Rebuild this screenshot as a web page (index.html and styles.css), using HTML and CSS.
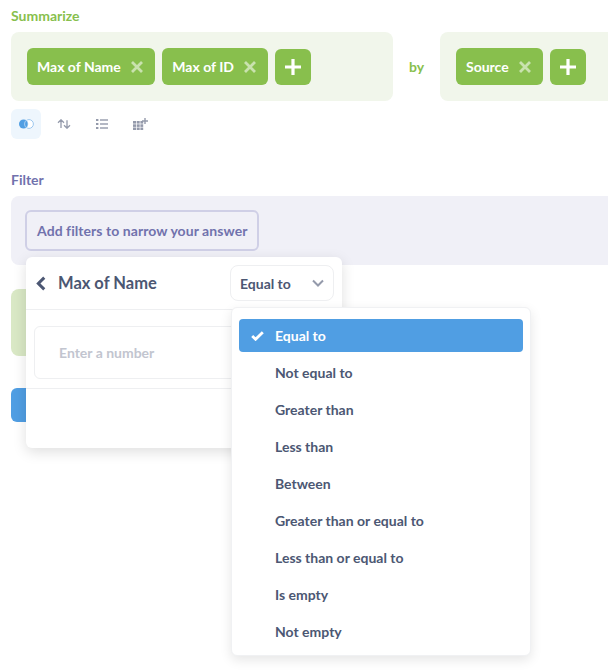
FILE: index.html
```html
<!DOCTYPE html>
<html lang="en">
<head>
<meta charset="utf-8">
<title>Summarize and filter</title>
<link rel="stylesheet" href="styles.css">
</head>
<body>
<main class="page">
  <section class="summarize">
    <h2 class="label label-green">Summarize</h2>
    <div class="sum-row">
      <div class="well well-main">
        <span class="pill">Max of Name <svg class="x" viewBox="0 0 12 12"><path d="M1 1l10 10M11 1L1 11"/></svg></span>
        <span class="pill">Max of ID <svg class="x" viewBox="0 0 12 12"><path d="M1 1l10 10M11 1L1 11"/></svg></span>
        <span class="add"><svg viewBox="0 0 16 16"><path d="M8 0v16M0 8h16"/></svg></span>
      </div>
      <span class="by">by</span>
      <div class="well well-by">
        <span class="pill">Source <svg class="x" viewBox="0 0 12 12"><path d="M1 1l10 10M11 1L1 11"/></svg></span>
        <span class="add"><svg viewBox="0 0 16 16"><path d="M8 0v16M0 8h16"/></svg></span>
      </div>
    </div>
    <div class="tools">
      <span class="tool tool-on"><svg viewBox="0 0 15 10" width="15" height="10"><circle cx="10" cy="5" r="4.400" fill="#fff" stroke="#9cc7ee" stroke-width="1"/><circle cx="4.600" cy="5" r="4.600" fill="#509ee3"/><path d="M7.300 1.200a5 5 0 0 1 0 7.600a5 5 0 0 1 0-7.600z" fill="#509ee3" stroke="#fff" stroke-width="0.500"/></svg></span>
      <span class="tool"><svg viewBox="0 0 14 10" width="14" height="10" fill="none" stroke="#949aab" stroke-width="1.300"><path d="M4 9V0.800M1 3.800L4 0.800l3 3M10 1.200V9.200M7 6.200l3 3 3-3"/></svg></span>
      <span class="tool"><svg viewBox="0 0 12 10" width="12" height="10" fill="#949aab"><rect x="0" y="0" width="2.400" height="2"/><rect x="0" y="4" width="2.400" height="2"/><rect x="0" y="8" width="2.400" height="2"/><rect x="4" y="0.300" width="8" height="1.400"/><rect x="4" y="4.300" width="8" height="1.400"/><rect x="4" y="8.300" width="8" height="1.400"/></svg></span>
      <span class="tool"><svg viewBox="0 0 15 12" width="15" height="12" fill="#949aab"><rect x="0" y="3" width="3" height="2.600"/><rect x="3.700" y="3" width="3" height="2.600"/><rect x="7.400" y="3" width="2.800" height="2.600"/><rect x="0" y="6.300" width="3" height="2.600"/><rect x="3.700" y="6.300" width="3" height="2.600"/><rect x="7.400" y="6.300" width="2.800" height="2.600"/><rect x="0" y="9.500" width="3" height="2.500"/><rect x="3.700" y="9.500" width="3" height="2.500"/><rect x="7.400" y="9.500" width="2.800" height="2.500"/><path d="M11.300 0h1.400v2.300H15v1.400h-2.300V6h-1.400V3.700H9V2.300h2.300z"/></svg></span>
    </div>
  </section>

  <section class="filter">
    <h2 class="label label-purple">Filter</h2>
    <div class="filter-well">
      <span class="filter-btn">Add filters to narrow your answer</span>
    </div>
    <div class="green-block"></div>
    <div class="blue-block"></div>
  </section>

  <div class="popover">
    <div class="pop-head">
      <svg class="back" viewBox="0 0 10 14"><path d="M8.500 1.500L3 7l5.500 5.500"/></svg>
      <span class="pop-title">Max of Name</span>
      <span class="select">Equal to <svg class="chev" viewBox="0 0 12 8"><path d="M1 1.500l5 5 5-5"/></svg></span>
    </div>
    <div class="pop-body">
      <div class="number">Enter a number</div>
    </div>
    <div class="pop-foot"></div>
  </div>

  <ul class="menu">
    <li class="item item-on"><svg class="check" viewBox="0 0 13 10"><path d="M1.200 5l3.400 3.300L11.800 1.300"/></svg>Equal to</li>
    <li class="item">Not equal to</li>
    <li class="item">Greater than</li>
    <li class="item">Less than</li>
    <li class="item">Between</li>
    <li class="item">Greater than or equal to</li>
    <li class="item">Less than or equal to</li>
    <li class="item">Is empty</li>
    <li class="item">Not empty</li>
  </ul>
</main>
</body>
</html>
```
FILE: styles.css
```css
* { box-sizing: border-box; }
html, body { margin: 0; padding: 0; background: #fff; }
body {
  width: 608px;
  height: 670px;
  overflow: hidden;
  font-family: Lato, "Open Sans", sans-serif;
  font-weight: 700;
  color: #4c5773;
}
.page { position: relative; width: 608px; height: 670px; overflow: hidden; padding: 8px 0 0 11px; }
.label { margin: 0; font-size: 14px; line-height: 16px; font-weight: 700; }
.label-green { color: #88bf4d; }
.label-purple { color: #7172ad; }

.sum-row { display: flex; align-items: center; margin-top: 8px; width: 700px; }
.well {
  display: flex;
  align-items: center;
  gap: 7.500px;
  height: 69px;
  padding: 0 16px;
  background: #f1f6eb;
  border-radius: 8px;
}
.well-main { width: 382px; }
.well-by { width: 200px; }
.by { width: 47px; text-align: center; color: #88bf4d; font-size: 14px; }
.pill {
  display: inline-flex;
  align-items: center;
  height: 37px;
  padding: 0 12px 0 10px;
  background: #88bf4d;
  color: #fff;
  font-size: 14px;
  border-radius: 6px;
  white-space: nowrap;
  gap: 10px;
}
.x { width: 12px; height: 12px; fill: none; stroke: #fff; stroke-opacity: 0.55; stroke-width: 2.800; }
.add {
  display: flex;
  align-items: center;
  justify-content: center;
  width: 36px;
  height: 36px;
  margin-top: 1px;
  background: #88bf4d;
  border-radius: 6px;
}
.add svg { width: 16px; height: 16px; fill: none; stroke: #fff; stroke-width: 3.200; }

.tools { display: flex; gap: 8px; margin-top: 8px; }
.tool { display: flex; align-items: center; justify-content: center; width: 30px; height: 30px; border-radius: 6px; }
.tool-on { background: #eef6fd; }

.filter { margin-top: 33px; }
.filter-well {
  margin-top: 8px;
  width: 640px;
  height: 69px;
  padding: 14px;
  background: #f0f0f7;
  border-radius: 8px;
}
.filter-btn {
  display: inline-flex;
  align-items: center;
  width: 234px;
  height: 41px;
  padding: 0 10px;
  border: 2px solid #cfcfe6;
  border-radius: 6px;
  color: #7172ad;
  font-size: 14px;
  letter-spacing: 0.060px;
  white-space: nowrap;
}
.green-block { width: 40px; height: 67px; margin-top: 24px; background: #d9e8c5; border-radius: 8px; }
.blue-block { width: 40px; height: 34px; margin-top: 32px; background: #509ee3; border-radius: 6px; }

.popover {
  position: absolute;
  left: 26px;
  top: 257px;
  width: 316px;
  height: 191px;
  background: #fff;
  border-radius: 6px;
  box-shadow: 0 4px 14px rgba(0, 0, 0, 0.13);
}
.pop-head {
  display: flex;
  align-items: center;
  height: 53px;
  padding: 0 8px 0 9px;
  border-bottom: 1px solid #eeeff1;
}
.back { width: 11px; height: 15px; fill: none; stroke: #4c5773; stroke-width: 2.800; margin-right: 12px; }
.pop-title { flex: 1; font-size: 16.500px; font-weight: 700; white-space: nowrap; }
.select {
  display: flex;
  align-items: center;
  justify-content: space-between;
  width: 104px;
  height: 36px;
  padding: 0 9px;
  border: 1px solid #eeeff1;
  border-radius: 8px;
  font-size: 14px;
  background: #fff;
}
.chev { width: 12px; height: 8px; fill: none; stroke: #949aab; stroke-width: 2; }
.pop-body { height: 79px; padding: 16px 8px; border-bottom: 1px solid #eeeff1; }
.number {
  width: 300px;
  height: 53px;
  padding-left: 24px;
  display: flex;
  align-items: center;
  border: 1px solid #eeeff1;
  border-radius: 6px;
  color: #c2c5cf;
  font-size: 14px;
}
.pop-foot { height: 60px; }

.menu {
  position: absolute;
  left: 231px;
  top: 307px;
  width: 300px;
  height: 349px;
  margin: 0;
  padding: 11px 7px 7px;
  list-style: none;
  background: #fff;
  border: 1px solid #f0f1f3;
  border-radius: 6px;
  box-shadow: 0 4px 12px rgba(0, 0, 0, 0.1);
  display: flex;
  flex-direction: column;
  gap: 4px;
}
.item {
  position: relative;
  flex: none;
  height: 33px;
  line-height: 33px;
  padding-left: 36px;
  font-size: 14px;
  border-radius: 4px;
  white-space: nowrap;
}
.item-on { background: #509ee3; color: #fff; }
.check { position: absolute; left: 12px; top: 12px; width: 13px; height: 10px; fill: none; stroke: #fff; stroke-width: 2.800; }
```
